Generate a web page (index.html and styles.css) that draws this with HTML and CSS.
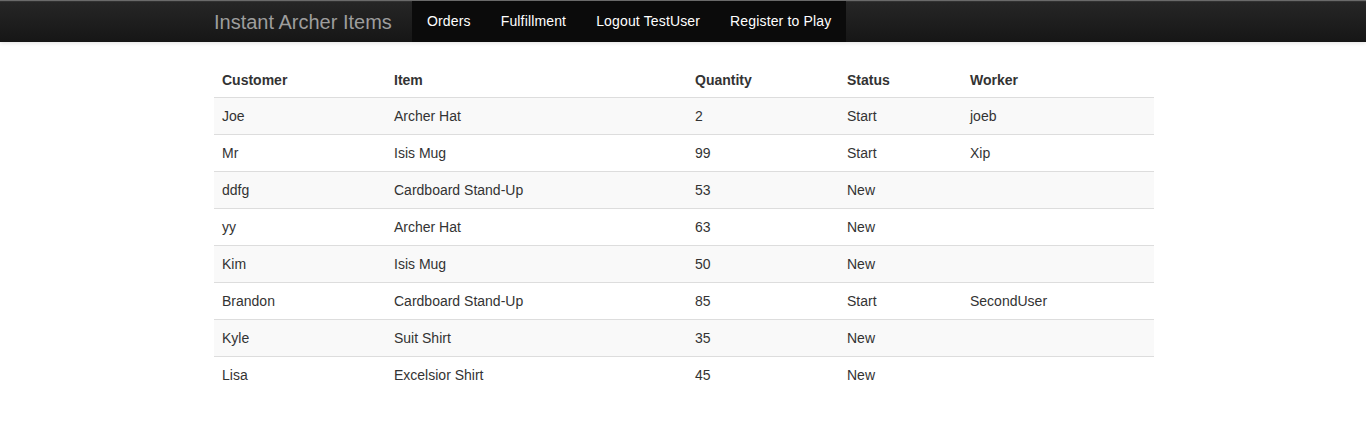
FILE: index.html
```html
<!DOCTYPE html>
<html>
<head>
<meta charset="utf-8">
<title>Instant Archer Items</title>
<link rel="stylesheet" href="styles.css">
</head>
<body>
<nav class="navbar">
  <div class="container nav-inner">
    <a class="brand" href="#">Instant Archer Items</a>
    <ul class="nav">
      <li><a href="#">Orders</a></li>
      <li><a href="#">Fulfillment</a></li>
      <li><a href="#">Logout TestUser</a></li>
      <li><a href="#">Register to Play</a></li>
    </ul>
  </div>
</nav>
<div class="container">
  <table class="orders">
    <colgroup>
      <col class="c1"><col class="c2"><col class="c3"><col class="c4"><col class="c5">
    </colgroup>
    <thead>
      <tr><th>Customer</th><th>Item</th><th>Quantity</th><th>Status</th><th>Worker</th></tr>
    </thead>
    <tbody>
      <tr><td>Joe</td><td>Archer Hat</td><td>2</td><td>Start</td><td>joeb</td></tr>
      <tr><td>Mr</td><td>Isis Mug</td><td>99</td><td>Start</td><td>Xip</td></tr>
      <tr><td>ddfg</td><td>Cardboard Stand-Up</td><td>53</td><td>New</td><td></td></tr>
      <tr><td>yy</td><td>Archer Hat</td><td>63</td><td>New</td><td></td></tr>
      <tr><td>Kim</td><td>Isis Mug</td><td>50</td><td>New</td><td></td></tr>
      <tr><td>Brandon</td><td>Cardboard Stand-Up</td><td>85</td><td>Start</td><td>SecondUser</td></tr>
      <tr><td>Kyle</td><td>Suit Shirt</td><td>35</td><td>New</td><td></td></tr>
      <tr><td>Lisa</td><td>Excelsior Shirt</td><td>45</td><td>New</td><td></td></tr>
    </tbody>
  </table>
</div>
</body>
</html>
```
FILE: styles.css
```css
* { box-sizing: border-box; }
html, body { margin: 0; padding: 0; }
body {
  font-family: "Liberation Sans", Arial, Helvetica, sans-serif;
  font-size: 14px;
  line-height: 20px;
  color: #333;
  background: #fff;
}
.container {
  width: 940px;
  margin: 0 auto;
  position: relative;
  left: 1px;
}
.navbar {
  height: 42px;
  background: linear-gradient(to bottom, #3a3a3a 0, #262626 3%, #161616 100%);
  border-top: 1px solid #6a6a6a;
  box-shadow: 0 1px 4px rgba(0,0,0,0.12);
}
.nav-inner {
  display: flex;
  align-items: stretch;
  height: 41px;
}
.brand {
  font-size: 20px;
  line-height: 41px;
  color: #9d9d9d;
  text-decoration: none;
  width: 198px;
  padding-top: 1px;
}
.nav {
  display: flex;
  list-style: none;
  margin: 0;
  padding: 0;
  background: #0b0b0b;
}
.nav li { display: block; }
.nav a {
  display: block;
  padding: 0 15px;
  line-height: 40px;
  color: #fff;
  text-decoration: none;
  font-size: 14px;
  letter-spacing: 0.15px;
}
.orders {
  width: 940px;
  border-collapse: collapse;
  border-spacing: 0;
  margin-top: 18px;
  table-layout: fixed;
}
.c1 { width: 172px; }
.c2 { width: 301px; }
.c3 { width: 152px; }
.c4 { width: 123px; }
.c5 { width: 192px; }
.orders th, .orders td {
  padding: 8px;
  text-align: left;
  vertical-align: top;
  line-height: 20px;
  height: 37px;
}
.orders th {
  font-weight: bold;
  color: #333;
  padding-top: 10px;
  padding-bottom: 6px;
}
.orders thead th { border-bottom: 1px solid #ddd; }
.orders tbody td { border-top: 1px solid #ddd; }
.orders tbody tr:nth-child(odd) td { background: #f9f9f9; }
```
